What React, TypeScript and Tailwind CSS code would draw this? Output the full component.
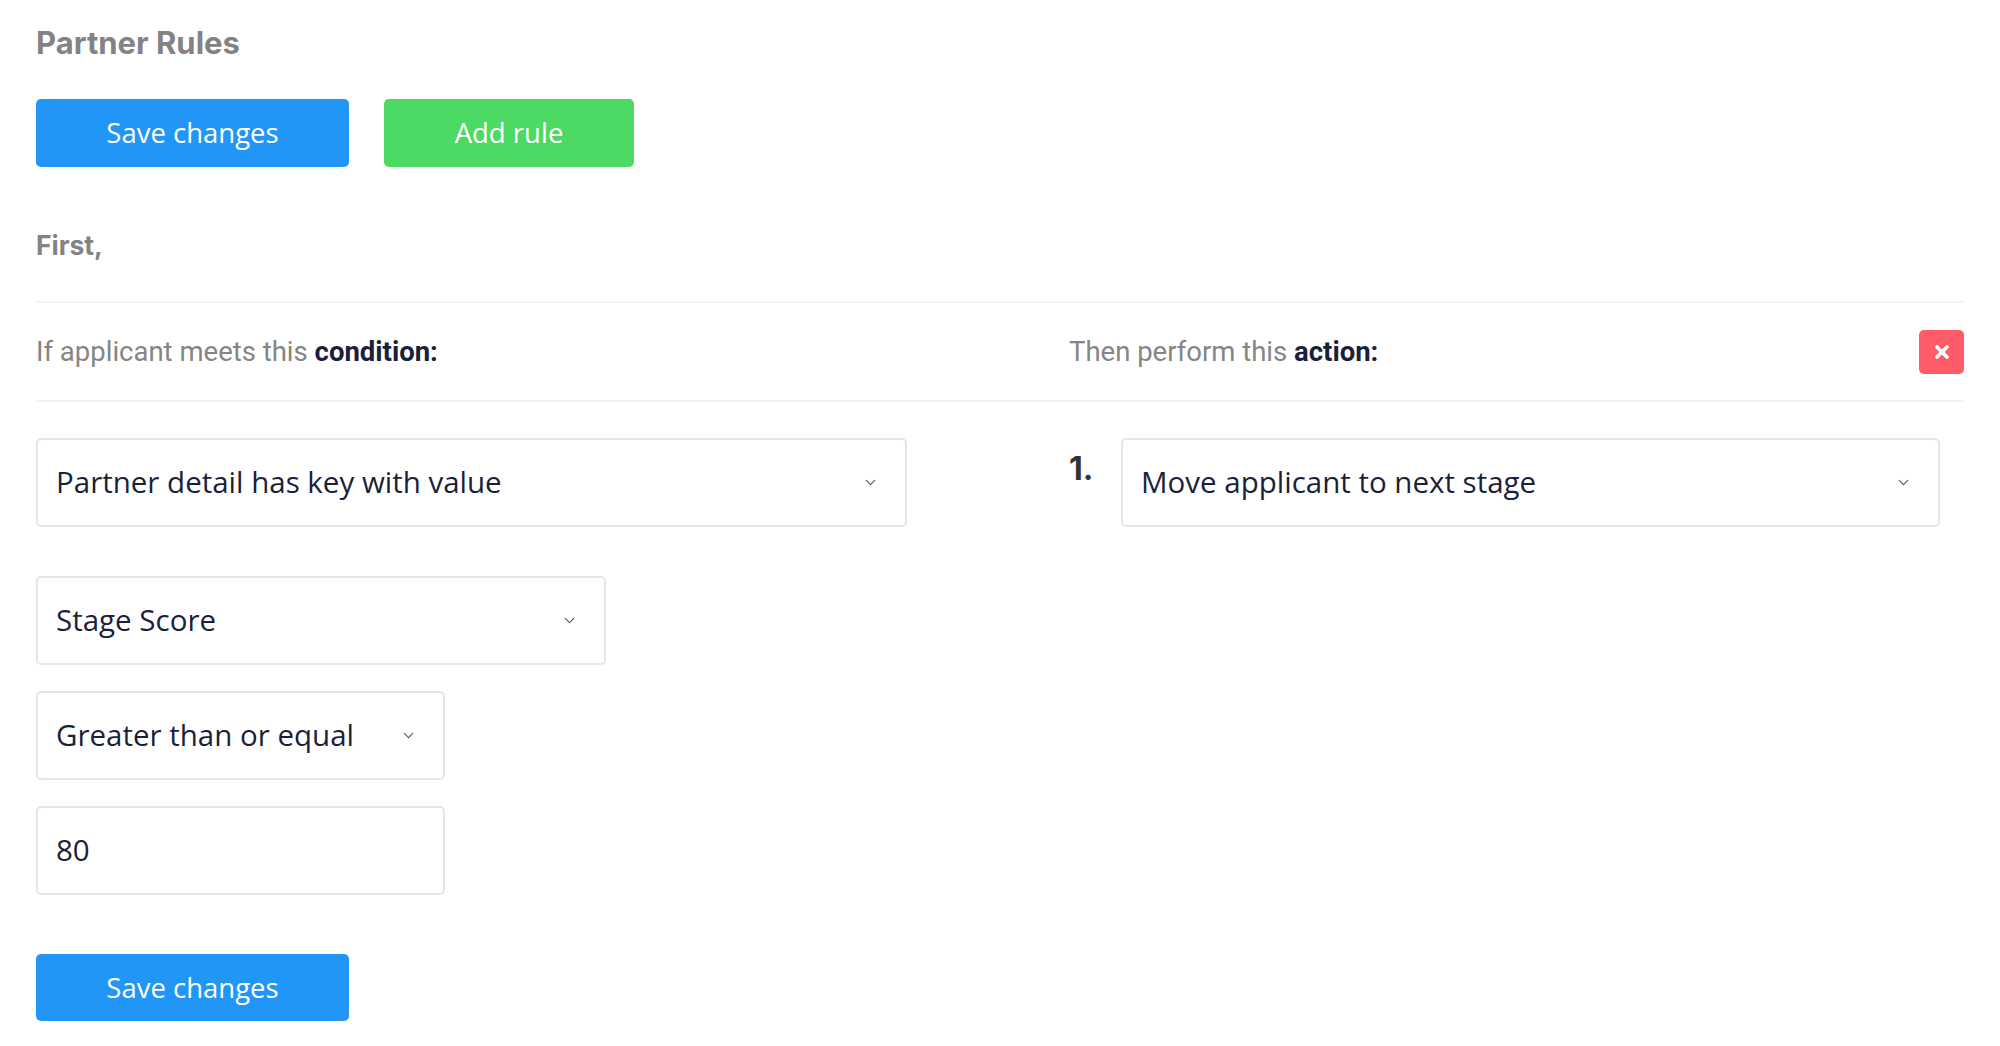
import { ChevronDown, X } from "lucide-react";

function Select({ value, width }: { value: string; width: string }) {
  return (
    <div
      className={`${width} h-[89px] flex items-center justify-between pl-[18px] pr-[26px] bg-white border-2 border-[#e6e6e6] rounded-[5px] text-[29.5px] text-[#1b1f3b] font-['Open_Sans',sans-serif]`}
    >
      <span>{value}</span>
      <ChevronDown className="w-[17px] h-[17px] text-[#555]" strokeWidth={1.6} />
    </div>
  );
}

export default function App() {
  return (
    <div className="min-h-screen bg-white px-[36px] pt-[25px] font-['Roboto',sans-serif]">
      <h1 className="text-[31px] leading-[36px] font-bold text-[#838383] font-['Inter',sans-serif]">
        Partner Rules
      </h1>

      {/* Top actions */}
      <div className="flex gap-[35px] mt-[38px] font-['Open_Sans',sans-serif]">
        <button className="w-[313px] h-[68px] rounded-[5px] bg-[#2196f7] text-white text-[27.5px]">
          Save changes
        </button>
        <button className="w-[250px] h-[68px] rounded-[5px] bg-[#4cd964] text-white text-[27.5px]">
          Add rule
        </button>
      </div>

      <p className="mt-[62px] text-[26.5px] leading-[32px] font-bold text-[#838383] font-['Inter',sans-serif]">
        First,
      </p>

      {/* Rule header */}
      <div className="mt-[40px] h-[101px] flex items-center border-y-2 border-[#eef4fb] text-[27.5px] text-[#858585]">
        <div className="w-[1033px]">
          If applicant meets this <span className="font-bold text-[#1b1f3b]">condition:</span>
        </div>
        <div className="flex-1 flex items-center justify-between">
          <div>
            Then perform this <span className="font-bold text-[#1b1f3b]">action:</span>
          </div>
          <button className="w-[45px] h-[44px] rounded-[5px] bg-[#ff5b68] flex items-center justify-center">
            <X className="w-[20px] h-[20px] text-white" strokeWidth={4.5} />
          </button>
        </div>
      </div>

      {/* Rule body */}
      <div className="flex mt-[36px]">
        <div className="w-[1033px] flex flex-col">
          <Select value="Partner detail has key with value" width="w-[871px]" />
          <div className="mt-[49px]">
            <Select value="Stage Score" width="w-[570px]" />
          </div>
          <div className="mt-[26px]">
            <Select value="Greater than or equal" width="w-[409px]" />
          </div>
          <div className="mt-[26px] w-[409px] h-[89px] flex items-center pl-[18px] bg-white border-2 border-[#e6e6e6] rounded-[5px] text-[29.5px] text-[#1b1f3b] font-['Open_Sans',sans-serif]">
            80
          </div>
        </div>
        <div className="flex-1 flex items-start pr-[24px]">
          <span className="w-[52px] pt-[7px] text-[32px] font-bold text-[#333] font-['Inter',sans-serif]">
            1.
          </span>
          <Select value="Move applicant to next stage" width="flex-1" />
        </div>
      </div>

      <button className="mt-[59px] w-[313px] h-[67px] rounded-[5px] bg-[#2196f7] text-white text-[27.5px] font-['Open_Sans',sans-serif]">
        Save changes
      </button>
    </div>
  );
}
